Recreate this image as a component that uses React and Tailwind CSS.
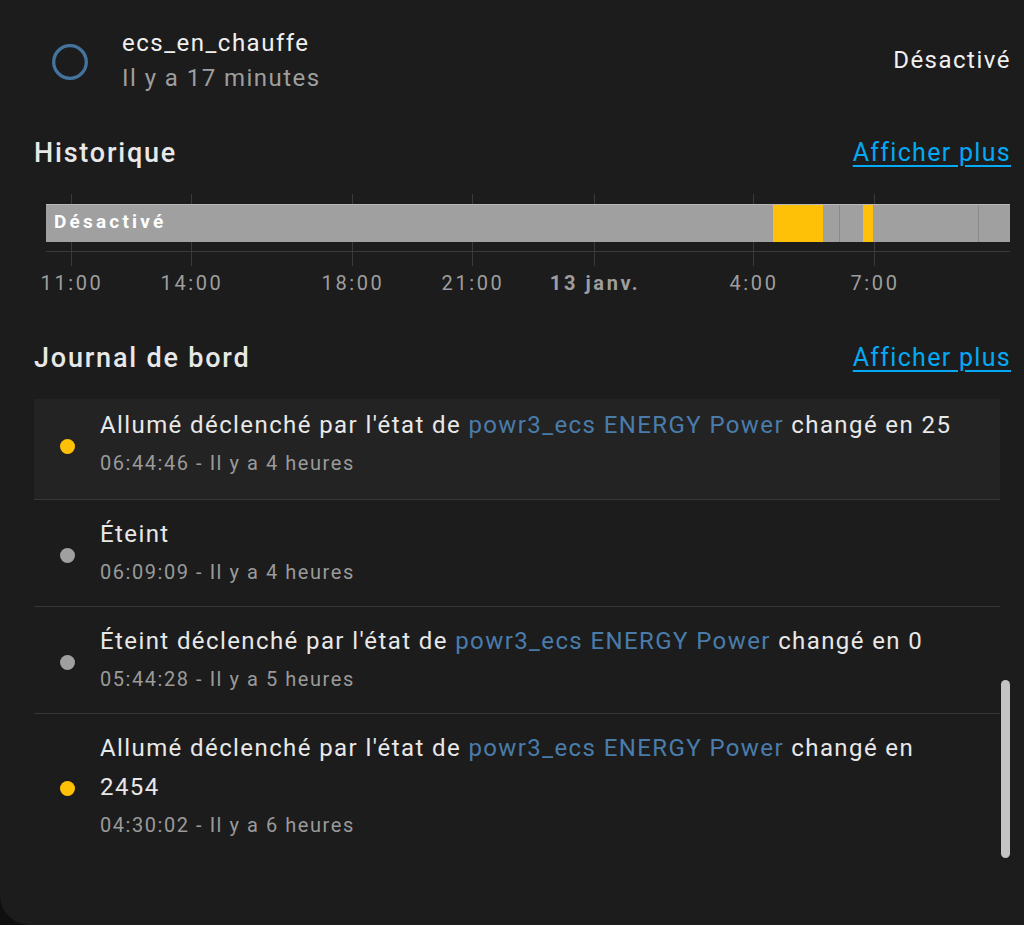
import React from "react";

const ticks = [
  { x: 37, label: "11:00" },
  { x: 157, label: "14:00" },
  { x: 318, label: "18:00" },
  { x: 438, label: "21:00" },
  { x: 560, label: "13 janv.", bold: true },
  { x: 719, label: "4:00" },
  { x: 840, label: "7:00" },
];

const segments = [
  { w: 727, c: "bg-[#a0a0a0]" },
  { w: 50, c: "bg-[#ffc107]" },
  { w: 16, c: "bg-[#a0a0a0]" },
  { w: 24, c: "bg-[#a0a0a0] border-l border-[#8a8a8a]" },
  { w: 10, c: "bg-[#ffc107]" },
  { w: 105, c: "bg-[#a0a0a0]" },
  { w: 32, c: "bg-[#a0a0a0] border-l border-[#8a8a8a]" },
];

const entries = [
  {
    dot: "bg-[#ffc107]",
    pre: "Allumé déclenché par l'état de ",
    link: "powr3_ecs ENERGY Power",
    post: " changé en 25",
    time: "06:44:46 - Il y a 4 heures",
    highlight: true,
  },
  { dot: "bg-[#a0a0a0]", pre: "Éteint", time: "06:09:09 - Il y a 4 heures" },
  {
    dot: "bg-[#a0a0a0]",
    pre: "Éteint déclenché par l'état de ",
    link: "powr3_ecs ENERGY Power",
    post: " changé en 0",
    time: "05:44:28 - Il y a 5 heures",
  },
  {
    dot: "bg-[#ffc107]",
    pre: "Allumé déclenché par l'état de ",
    link: "powr3_ecs ENERGY Power",
    post: " changé en 2454",
    time: "04:30:02 - Il y a 6 heures",
    last: true,
  },
];

export default function App() {
  return (
    <div
      className="w-[1024px] h-[927px] bg-white overflow-hidden"
      style={{ fontFamily: "Roboto, 'Liberation Sans', sans-serif" }}
    >
      <div className="h-[925px] bg-[#0f0f0f]">
        <div className="h-[925px] bg-[#1c1c1c] rounded-bl-[30px] pl-[34px] pr-[14px] pt-[25px] text-[#e1e1e1] overflow-hidden">
          {/* Header */}
          <div className="flex items-center">
            <div className="w-[88px] flex items-center">
              <svg width="38" height="38" viewBox="0 0 38 38" className="ml-[17px] mt-[4px]">
                <circle cx="19" cy="19" r="16.3" fill="none" stroke="#44739e" strokeWidth="3.3" />
              </svg>
            </div>
            <div className="flex-1">
              <div className="text-[24px] leading-[36px] tracking-[1.5px] text-[#f0f0f0]">ecs_en_chauffe</div>
              <div className="text-[24px] leading-[34px] tracking-[1.45px] text-[#9e9e9e]">Il y a 17 minutes</div>
            </div>
            <div className="text-[24px] tracking-[1.5px] text-[#f0f0f0] mr-[-1px]">Désactivé</div>
          </div>

          {/* Historique */}
          <div className="mt-[40px] flex items-center justify-between h-[36px]">
            <div className="text-[27px] font-medium tracking-[1.8px] text-[#e8e8e8]">Historique</div>
            <div className="text-[25px] tracking-[1.3px] text-[#03a9f4] underline underline-offset-[4px] mr-[-1px]">
              Afficher plus
            </div>
          </div>

          {/* Chart */}
          <div className="relative mt-[19px] h-[110px]">
            {ticks.map((t) => (
              <div
                key={t.label}
                className="absolute top-[4px] w-px h-[72px] bg-[#3a3a3a]"
                style={{ left: t.x }}
              />
            ))}
            <div className="absolute left-[12px] top-[61px] w-[964px] h-px bg-[#3a3a3a]" />
            <div className="absolute left-[12px] top-[14px] w-[964px] h-[38px] flex border-t border-[#b8b8b8]">
              {segments.map((s, i) => (
                <div key={i} className={s.c} style={{ width: s.w }} />
              ))}
            </div>
            <div className="absolute left-[20px] top-[13px] h-[38px] flex items-center text-[19px] font-bold tracking-[3.2px] text-white">
              Désactivé
            </div>
            {ticks.map((t) => (
              <div
                key={"l" + t.label}
                className={
                  "absolute top-[80px] w-[140px] text-center text-[20px] leading-[26px] tracking-[2.6px] text-[#9e9e9e] " +
                  (t.bold ? "font-bold" : "")
                }
                style={{ left: t.x - 69 }}
              >
                {t.label}
              </div>
            ))}
          </div>

          {/* Journal */}
          <div className="mt-[40px] flex items-center justify-between h-[36px]">
            <div className="text-[27px] font-medium tracking-[1.8px] text-[#e8e8e8]">Journal de bord</div>
            <div className="text-[25px] tracking-[1.3px] text-[#03a9f4] underline underline-offset-[4px] mr-[-1px]">
              Afficher plus
            </div>
          </div>

          <div className="mt-[23px] flex">
            <div className="flex-1">
              {entries.map((e, i) => (
                <div
                  key={i}
                  className={
                    "flex items-center " +
                    (e.highlight ? "bg-[#232323] pt-[7px] pb-[17px] " : "py-[15px] ") +
                    (e.last ? "" : "border-b border-[#363636]")
                  }
                >
                  <div className="w-[66px] flex justify-center shrink-0">
                    <div className={"w-[15px] h-[15px] rounded-full mt-[4px] " + e.dot} />
                  </div>
                  <div className="flex-1 pr-[36px]">
                    <p className="text-[24px] leading-[39px] tracking-[1.4px] text-[#e8e8e8]">
                      {e.pre}
                      {e.link && <span className="text-[#4a7cab]">{e.link}</span>}
                      {e.post}
                    </p>
                    <div className="text-[20px] leading-[37px] tracking-[1.55px] text-[#9a9a9a]">{e.time}</div>
                  </div>
                </div>
              ))}
            </div>
            <div className="w-[10px]">
              <div className="mt-[281px] ml-[1px] h-[178px] w-[9px] rounded-full bg-[#c4c4c4]" />
            </div>
          </div>
        </div>
      </div>
    </div>
  );
}
